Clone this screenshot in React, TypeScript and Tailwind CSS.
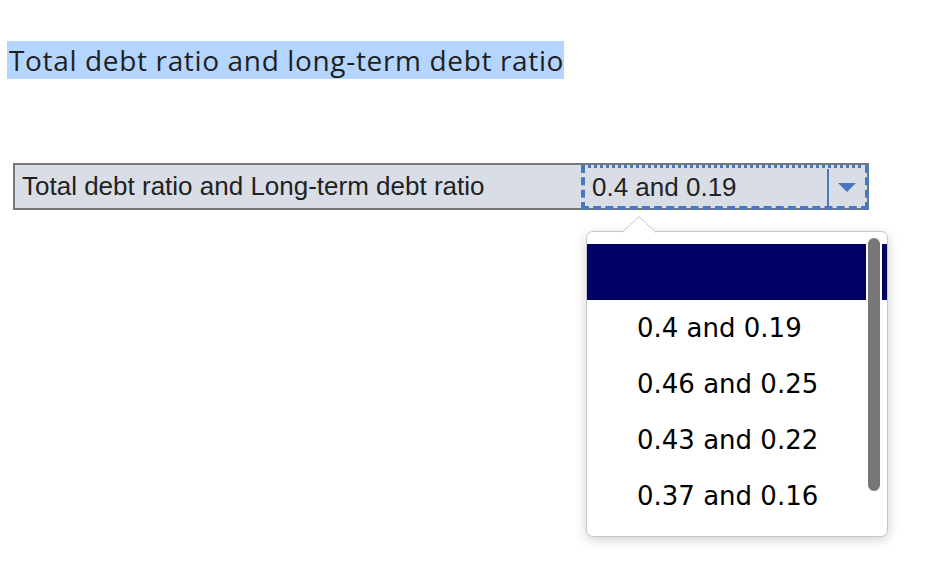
import React from "react";

const OPTIONS = ["", "0.4 and 0.19", "0.46 and 0.25", "0.43 and 0.22", "0.37 and 0.16"];

export default function App() {
  return (
    <div className="min-h-[568px] w-[950px] bg-white pt-[42px]">
      <h2 className="pl-[7px] font-['Open_Sans',sans-serif] text-[28px] font-normal leading-[36px] tracking-[0.65px] text-[#1f1f1f]">
        <span className="bg-[#b4d5fe] pl-[2px]">Total debt ratio and long-term debt ratio</span>
      </h2>

      <div className="relative ml-[13px] mt-[85px] flex h-[47px] w-[856px] border-2 border-[#777] bg-[#d9dde6] font-['Liberation_Sans',Arial,sans-serif] text-[26px] text-[#222]">
        <div className="flex w-[566px] items-center pl-[7px]">Total debt ratio and Long-term debt ratio</div>

        {/* focused dropdown */}
        <div className="-mb-[2px] -mr-[2px] flex flex-1 items-center border-[4px] border-t-[3px] border-dashed border-[#4a78be] [border-top-style:dotted]">
          <span className="flex-1 pl-[7px] leading-none">0.4 and 0.19</span>
          <div className="h-[37px] w-[2px] bg-[#4a78be]" />
          <div className="flex w-[36px] items-center justify-center">
            <svg width="18" height="9" viewBox="0 0 18 9">
              <path d="M0 0H18L9 9Z" fill="#4a78be" />
            </svg>
          </div>
        </div>

        {/* popup list */}
        <div className="absolute left-[571px] top-[66px] z-10 w-[302px] rounded-[7px] border border-[#c8c8c8] bg-white py-[12px] shadow-[0_3px_12px_rgba(0,0,0,0.18)]">
          <svg className="absolute -top-[16px] left-[35px]" width="34" height="17" viewBox="0 0 34 17">
            <path d="M0 16.5L17 0.5L34 16.5" fill="white" stroke="#c8c8c8" strokeWidth="1" />
          </svg>
          <ul className="font-['DejaVu_Sans',Verdana,sans-serif] text-[26px] text-black">
            {OPTIONS.map((o, i) => (
              <li
                key={i}
                className={`flex h-[56px] items-center pl-[50px] ${i === 0 ? "bg-[#000066]" : ""}`}
              >
                {o}
              </li>
            ))}
          </ul>
          <div className="absolute right-[5px] top-[4px] h-[257px] w-[16px] rounded-full border-2 border-white bg-[#777]" />
        </div>
      </div>
    </div>
  );
}
